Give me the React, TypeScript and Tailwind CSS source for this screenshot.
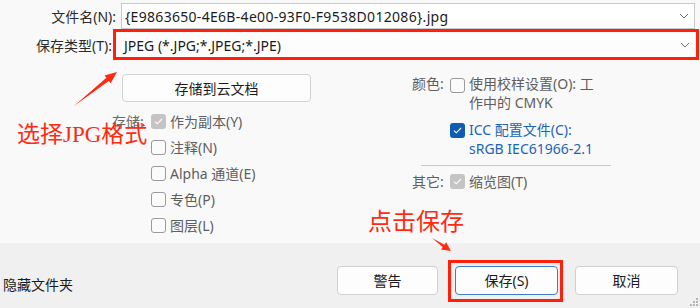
import React from "react";

const Chevron = () => (
  <svg width="10" height="6" viewBox="0 0 10 6" className="shrink-0">
    <path d="M1 1 L5 5 L9 1" fill="none" stroke="#6f6f6f" strokeWidth="1" />
  </svg>
);

const Box = ({ kind }: { kind: "empty" | "gray" | "blue" }) => {
  if (kind === "empty")
    return <div className="w-[15px] h-[15px] shrink-0 rounded-[3px] border border-[#9a9a9a] bg-[#fbfbfb]" />;
  const bg = kind === "gray" ? "bg-[#c4c4c4]" : "bg-[#0f5db3]";
  return (
    <div className={`w-[15px] h-[15px] shrink-0 rounded-[3px] ${bg} flex items-center justify-center`}>
      <svg width="9" height="7" viewBox="0 0 9 7">
        <path d="M1 3.6 L3.3 5.8 L8 1" fill="none" stroke="#ffffff" strokeWidth="1.1" />
      </svg>
    </div>
  );
};

const Opt = ({ kind, label }: { kind: "empty" | "gray" | "blue"; label: string }) => (
  <div className="flex items-center h-[26px]">
    <Box kind={kind} />
    <span className="ml-[4px] text-[#5e5e5e]">{label}</span>
  </div>
);

export default function App() {
  return (
    <div className="w-[700px] h-[308px] relative overflow-hidden bg-[#f9f9f9] text-[14px] text-[#1b1b1b] flex flex-col font-['Noto_Sans','Noto_Sans_CJK_SC',sans-serif] leading-[19px]">
      <div className="h-[243px] flex flex-col">
        <div className="flex items-center mt-[3px] h-[26px]">
          <div className="w-[116px] text-right text-[#2b2b2b]">文件名(N):</div>
          <div className="ml-[5px] w-[574px] h-[26px] border border-[#c9c9c9] bg-white flex items-center pl-[3px] pr-[5px]">
            <span className="flex-1 tracking-[0.3px]">{"{E9863650-4E6B-4e00-93F0-F9538D012086}.jpg"}</span>
            <Chevron />
          </div>
        </div>
        <div className="flex items-center mt-[4px] h-[24px]">
          <div className="w-[112px] text-right text-[#2b2b2b]">保存类型(T):</div>
          <div className="ml-[9px] w-[574px] h-[24px] bg-[#fdfdfd] flex items-center pl-[3px] pr-[5px]">
            <span className="flex-1">JPEG (*.JPG;*.JPEG;*.JPE)</span>
            <Chevron />
          </div>
        </div>
        <div className="flex items-start mt-[17px]">
          <div className="ml-[112px] w-[300px] flex flex-col">
            <div className="ml-[10px] w-[189px] h-[28px] rounded-[4px] border border-[#d2d2d2] bg-[#fdfdfd] flex items-center justify-center text-[#1b1b1b]">
              存储到云文档
            </div>
            <div className="flex mt-[6px]">
              <div className="w-[39px] h-[26px] flex items-center text-[#6a6a6a]">存储:</div>
              <div className="flex flex-col">
                <Opt kind="gray" label="作为副本(Y)" />
                <Opt kind="empty" label="注释(N)" />
                <Opt kind="empty" label="Alpha 通道(E)" />
                <Opt kind="empty" label="专色(P)" />
                <Opt kind="empty" label="图层(L)" />
              </div>
            </div>
          </div>
          <div className="flex flex-col">
            <div className="flex items-start">
              <div className="w-[38px] text-[#5e5e5e]">颜色:</div>
              <div className="mt-[4px]"><Box kind="empty" /></div>
              <div className="ml-[4px] text-[#5e5e5e]">
                使用校样设置(O): 工<br />作中的 CMYK
              </div>
            </div>
            <div className="flex items-start mt-[8px] ml-[38px]">
              <div className="mt-[3px]"><Box kind="blue" /></div>
              <div className="ml-[4px] text-[#1b64b8]">
                ICC 配置文件(C):<br />sRGB IEC61966-2.1
              </div>
            </div>
            <div className="mt-[7px] ml-[9px] w-[190px] h-[1px] bg-[#c8c8c8]" />
            <div className="flex items-center h-[28px] mt-[1px]">
              <div className="w-[38px] text-[#5e5e5e]">其它:</div>
              <Box kind="gray" />
              <span className="ml-[4px] text-[#5e5e5e]">缩览图(T)</span>
            </div>
          </div>
        </div>
      </div>
      <div className="flex-1 bg-[#f0f0f0] flex items-start">
        <div className="mt-[32px] ml-[3px] text-[#1b1b1b]">隐藏文件夹</div>
        <div className="ml-auto mr-[22px] mt-[23px] flex gap-[17px]">
          <div className="w-[101px] h-[29px] rounded-[4px] border border-[#d0d0d0] bg-[#fdfdfd] flex items-center justify-center">警告</div>
          <div className="w-[103px] h-[29px] rounded-[4px] border border-[#3b7fc9] bg-[#fdfdfd] flex items-center justify-center">保存(S)</div>
          <div className="w-[103px] h-[29px] rounded-[4px] border border-[#d0d0d0] bg-[#fdfdfd] flex items-center justify-center">取消</div>
        </div>
      </div>

      {/* annotations */}
      <div className="absolute left-[113px] top-[29px] w-[586px] h-[31px] border-[3px] border-[#ff1f0a]" />
      <div className="absolute left-[448px] top-[260px] w-[115px] h-[42px] border-[3px] border-[#ff1f0a]" />
      <svg className="absolute left-0 top-0" width="700" height="308" viewBox="0 0 700 308">
        <polygon points="74,106 108.8,81 110.7,83.3 117,72 104.5,75.5 106.4,77.8" fill="#ff2a12" />
        <polygon points="432,238 442.75,247.1 441.1,249.6 451,251 446.1,242.2 444.45,244.7" fill="#ff2a12" />
        <g fill="#b5b5b5">
          <rect x="696" y="298" width="2" height="2" />
          <rect x="693" y="301" width="2" height="2" />
          <rect x="696" y="301" width="2" height="2" />
          <rect x="690" y="304" width="2" height="2" />
          <rect x="693" y="304" width="2" height="2" />
          <rect x="696" y="304" width="2" height="2" />
        </g>
      </svg>
      <div className="absolute left-[17px] top-[121px] text-[23px] leading-[28px] text-[#ff2a12] font-['Liberation_Serif','Noto_Sans_CJK_SC',serif]">
        选择JPG格式
      </div>
      <div className="absolute left-[368px] top-[206px] text-[24px] leading-[28px] text-[#ff2a12] font-['Noto_Sans_CJK_SC',sans-serif]">
        点击保存
      </div>
    </div>
  );
}
